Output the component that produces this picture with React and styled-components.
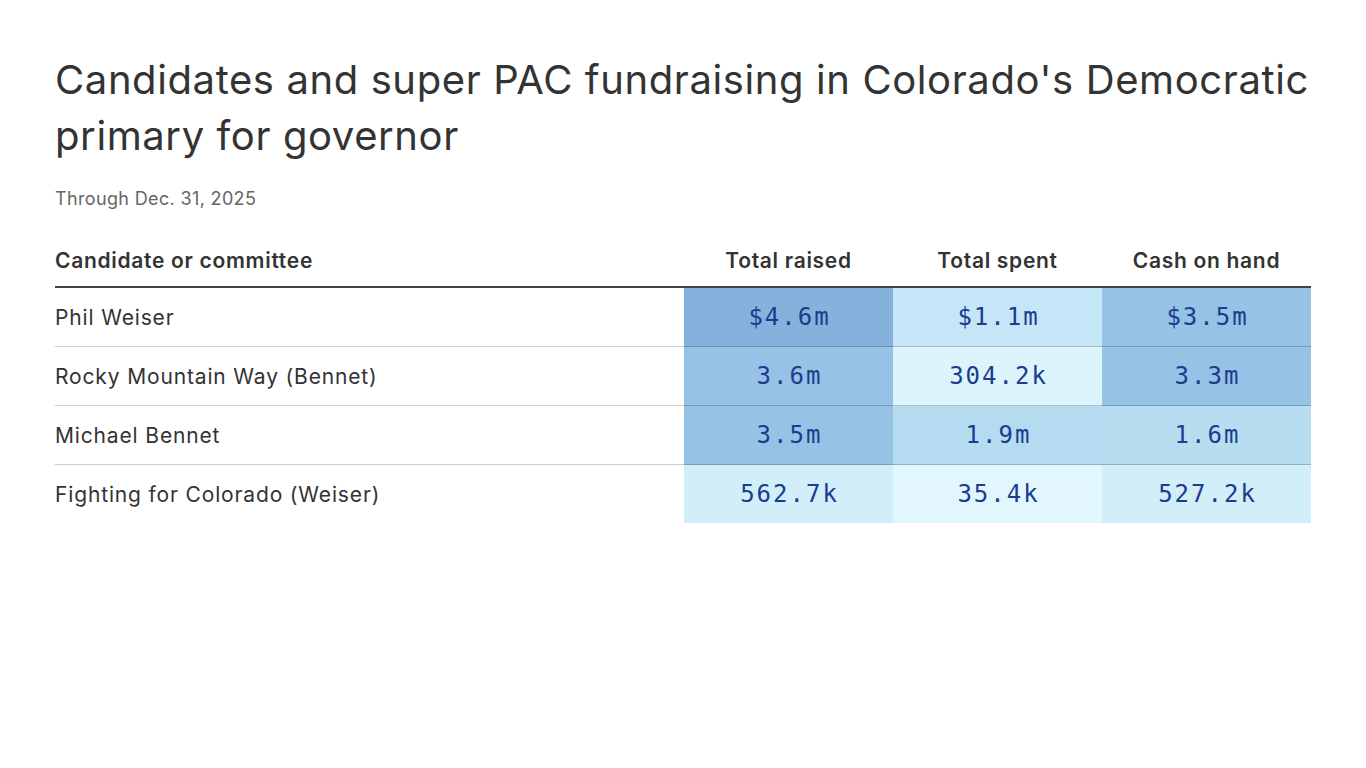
import React from 'react';
import styled, { createGlobalStyle } from 'styled-components';

const GlobalStyle = createGlobalStyle`
  body {
    margin: 0;
    background: #ffffff;
    font-family: Inter, "Noto Sans", sans-serif;
    color: #333333;
  }
`;

const Page = styled.div`
  padding: 52px 55px 40px;
`;

const Title = styled.h1`
  margin: 0;
  font-size: 40px;
  line-height: 56px;
  font-weight: 400;
  color: #333333;
  letter-spacing: 0.6px;
`;

const Subtitle = styled.p`
  margin: 23px 0 0;
  font-size: 18px;
  line-height: 24px;
  color: #666666;
  letter-spacing: 0.35px;
`;

const Table = styled.table`
  margin-top: 38px;
  width: 100%;
  border-collapse: collapse;
  table-layout: fixed;
`;

const HeadCell = styled.th`
  padding: 0 0 13px;
  font-size: 21px;
  line-height: 24px;
  font-weight: 600;
  color: #333333;
  letter-spacing: 0.7px;
  text-align: ${(props) => (props.center ? 'center' : 'left')};
  width: ${(props) => (props.center ? '209px' : 'auto')};
  border-bottom: 2px solid #444444;
`;

const Row = styled.tr`
  border-bottom: ${(props) => (props.last ? 'none' : '1px solid rgba(0, 0, 0, 0.2)')};
`;

const NameCell = styled.td`
  height: 58px;
  padding: 0;
  font-size: 21px;
  letter-spacing: 0.85px;
  color: #333333;
`;

const ValueCell = styled.td`
  height: 58px;
  padding: 0 0 0 2px;
  text-align: center;
  background: ${(props) => props.bg};
  font-family: "DejaVu Sans Mono", "Liberation Mono", monospace;
  font-size: 24px;
  letter-spacing: 2px;
  color: #1a3d8f;
`;

const rows = [
  {
    name: 'Phil Weiser',
    values: [
      ['$4.6m', '#85b2dc'],
      ['$1.1m', '#c5e6f6'],
      ['$3.5m', '#96c2e6'],
    ],
  },
  {
    name: 'Rocky Mountain Way (Bennet)',
    values: [
      ['3.6m', '#96c2e6'],
      ['304.2k', '#dcf4fc'],
      ['3.3m', '#96c2e6'],
    ],
  },
  {
    name: 'Michael Bennet',
    values: [
      ['3.5m', '#96c2e6'],
      ['1.9m', '#b5dbf1'],
      ['1.6m', '#b8ddf1'],
    ],
  },
  {
    name: 'Fighting for Colorado (Weiser)',
    values: [
      ['562.7k', '#d2eff9'],
      ['35.4k', '#e2f7fd'],
      ['527.2k', '#d2eff9'],
    ],
  },
];

export default function App() {
  return (
    <>
      <GlobalStyle />
      <Page>
        <Title>Candidates and super PAC fundraising in Colorado's Democratic primary for governor</Title>
        <Subtitle>Through Dec. 31, 2025</Subtitle>
        <Table>
          <thead>
            <tr>
              <HeadCell>Candidate or committee</HeadCell>
              <HeadCell center>Total raised</HeadCell>
              <HeadCell center>Total spent</HeadCell>
              <HeadCell center>Cash on hand</HeadCell>
            </tr>
          </thead>
          <tbody>
            {rows.map((row, i) => (
              <Row key={row.name} last={i === rows.length - 1}>
                <NameCell>{row.name}</NameCell>
                {row.values.map(([value, bg]) => (
                  <ValueCell key={value} bg={bg}>
                    {value}
                  </ValueCell>
                ))}
              </Row>
            ))}
          </tbody>
        </Table>
      </Page>
    </>
  );
}
